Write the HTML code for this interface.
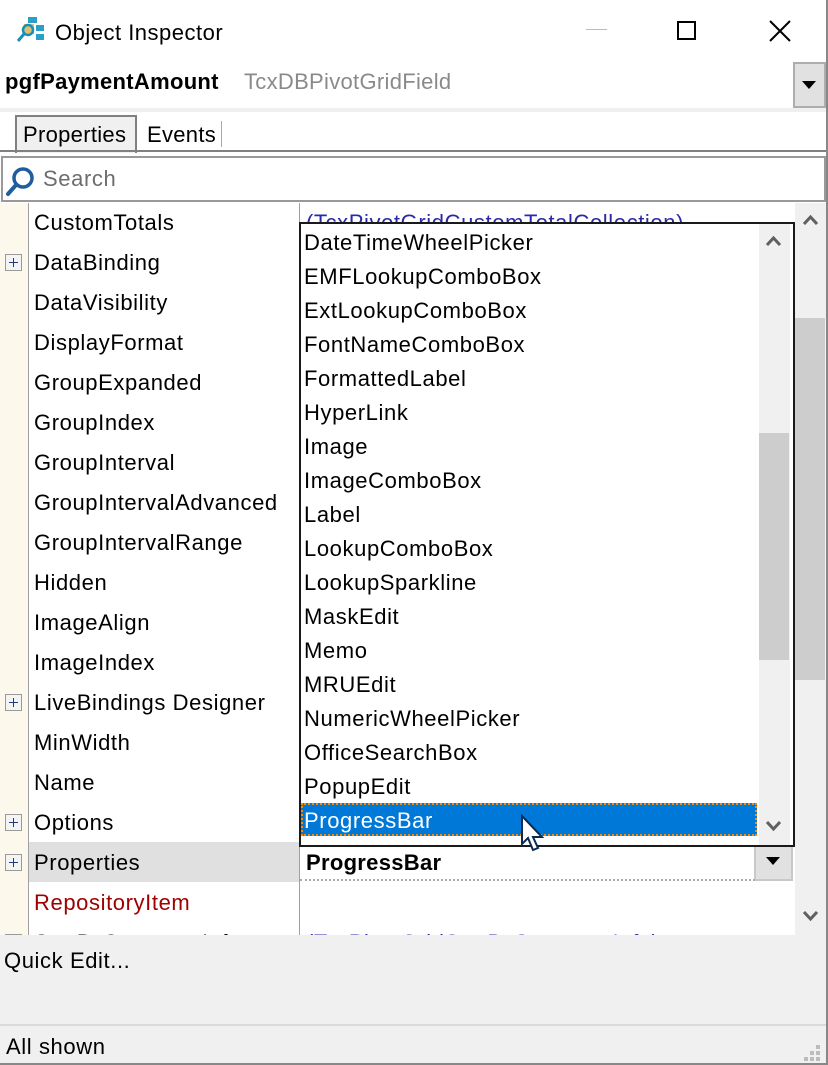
<!DOCTYPE html>
<html><head><style>
*{margin:0;padding:0;box-sizing:border-box}
body{width:828px;height:1065px;overflow:hidden;background:#fff;font-family:"Liberation Sans",sans-serif;font-size:22px;letter-spacing:0.6px;color:#000;position:relative}
.a{position:absolute;white-space:nowrap}
.row{position:absolute;left:34px;height:40px;line-height:42px}
.it{position:absolute;left:304px;height:34px;line-height:36px}
.plus{position:absolute;left:5px;width:17px;height:17px;border:1px solid #999;background:#f4f4f4}
.plus:before{content:"";position:absolute;left:3px;top:7px;width:9px;height:1px;background:#1c3d7a}
.plus:after{content:"";position:absolute;left:7px;top:3px;width:1px;height:9px;background:#1c3d7a}
</style></head><body>
<svg class="a" style="left:16px;top:16px" width="30" height="30" viewBox="0 0 30 30"><rect x="12" y="1" width="9" height="6" fill="#2aa0c8"/><rect x="20" y="9" width="8" height="6" fill="#2aa0c8"/><rect x="20" y="18" width="8" height="6" fill="#2aa0c8"/><rect x="8" y="8" width="10" height="10" fill="#e0c070"/><circle cx="12" cy="14" r="5" fill="none" stroke="#1a8fb8" stroke-width="2.5"/><line x1="8" y1="18" x2="2" y2="25" stroke="#1a8fb8" stroke-width="3"/></svg>
<div class="a" style="left:55px;top:20px;font-size:22px;letter-spacing:0.5px">Object Inspector</div>
<div class="a" style="left:586px;top:29px;width:21px;height:1px;background:#bbb"></div>
<div class="a" style="left:677px;top:21px;width:19px;height:19px;border:2px solid #000"></div>
<svg class="a" style="left:769px;top:20px" width="22" height="22"><path d="M1 1L21 21M21 1L1 21" stroke="#000" stroke-width="2"/></svg>
<div class="a" style="left:5px;top:69px;font-weight:bold;font-size:22px;letter-spacing:0.3px">pgfPaymentAmount</div>
<div class="a" style="left:244px;top:69px;font-size:22px;color:#8a8a8a;letter-spacing:0.3px">TcxDBPivotGridField</div>
<div class="a" style="left:793px;top:62px;width:33px;height:46px;background:#e1e1e1;border:2px solid #adadad"></div>
<svg class="a" style="left:802px;top:81px" width="14" height="9"><path d="M0 0H14L7 8Z" fill="#000"/></svg>
<div class="a" style="left:0;top:108px;width:828px;height:4px;background:#f0f0f0"></div>
<div class="a" style="left:15px;top:115px;width:122px;height:38px;border:2px solid #808080;border-bottom:none;background:#f0f0f0"></div>
<div class="a" style="left:23px;top:122px;letter-spacing:0.3px">Properties</div>
<div class="a" style="left:147px;top:122px;letter-spacing:0.3px">Events</div>
<div class="a" style="left:221px;top:121px;width:1px;height:26px;background:#aaa"></div>
<div class="a" style="left:0;top:150px;width:828px;height:2px;background:#808080"></div>
<div class="a" style="left:1px;top:156px;width:825px;height:46px;border:2px solid #999;background:#fff"></div>
<svg class="a" style="left:5px;top:166px" width="30" height="32"><circle cx="18" cy="12" r="9" fill="none" stroke="#1f5e9e" stroke-width="3.5"/><line x1="11" y1="19" x2="3" y2="28" stroke="#1f5e9e" stroke-width="4" stroke-linecap="round"/></svg>
<div class="a" style="left:43px;top:166px;color:#6d6d6d">Search</div>
<div class="a" style="left:0;top:203px;width:28px;height:732px;background:#fdf8ec"></div>
<div class="a" style="left:28px;top:203px;width:1px;height:732px;background:#a0a0a0"></div>
<div class="a" style="left:299px;top:203px;width:1px;height:732px;background:#a0a0a0"></div>
<div class="a" style="left:29px;top:842px;width:270px;height:40px;background:#e0e0e0"></div>
<div class="row" style="top:202px">CustomTotals</div>
<div class="row" style="top:242px">DataBinding</div><div class="plus" style="top:254px"></div>
<div class="row" style="top:282px">DataVisibility</div>
<div class="row" style="top:322px">DisplayFormat</div>
<div class="row" style="top:362px">GroupExpanded</div>
<div class="row" style="top:402px">GroupIndex</div>
<div class="row" style="top:442px">GroupInterval</div>
<div class="row" style="top:482px">GroupIntervalAdvanced</div>
<div class="row" style="top:522px">GroupIntervalRange</div>
<div class="row" style="top:562px">Hidden</div>
<div class="row" style="top:602px">ImageAlign</div>
<div class="row" style="top:642px">ImageIndex</div>
<div class="row" style="top:682px">LiveBindings Designer</div><div class="plus" style="top:694px"></div>
<div class="row" style="top:722px">MinWidth</div>
<div class="row" style="top:762px">Name</div>
<div class="row" style="top:802px">Options</div><div class="plus" style="top:814px"></div>
<div class="row" style="top:842px">Properties</div><div class="plus" style="top:854px"></div>
<div class="row" style="top:882px;color:#a00000">RepositoryItem</div>
<div class="row" style="top:922px">SortBySummaryInfo</div><div class="plus" style="top:934px"></div>
<div class="a" style="left:306px;top:202px;height:40px;line-height:42px;color:#2a2aa8">(TcxPivotGridCustomTotalCollection)</div>
<div class="a" style="left:306px;top:922px;height:40px;line-height:42px;color:#2a2aa8">(TcxPivotGridSortBySummaryInfo)</div>
<div class="a" style="left:306px;top:842px;height:40px;line-height:42px;font-weight:bold;letter-spacing:0.3px">ProgressBar</div>
<div class="a" style="left:754px;top:844px;width:39px;height:37px;background:#e1e1e1;border:2px solid #c8c8c8"></div>
<svg class="a" style="left:766px;top:857px" width="14" height="9"><path d="M0 0H14L7 8Z" fill="#000"/></svg>
<div class="a" style="left:300px;top:879px;width:455px;border-top:2px dotted #aaa"></div>
<div class="a" style="left:795px;top:203px;width:31px;height:732px;background:#f0f0f0"></div>
<div class="a" style="left:795px;top:318px;width:30px;height:362px;background:#cdcdcd"></div>
<svg class="a" style="left:803px;top:215px" width="15" height="10"><path d="M1 9L7.5 2L14 9" fill="none" stroke="#606060" stroke-width="3"/></svg>
<svg class="a" style="left:803px;top:911px" width="15" height="10"><path d="M1 1L7.5 8L14 1" fill="none" stroke="#606060" stroke-width="3"/></svg>
<div class="a" style="left:299px;top:222px;width:496px;height:625px;border:2px solid #1a1a1a;background:#fff"></div>
<div class="a" style="left:759px;top:224px;width:31px;height:621px;background:#f0f0f0"></div>
<div class="a" style="left:759px;top:433px;width:30px;height:227px;background:#cdcdcd"></div>
<svg class="a" style="left:766px;top:236px" width="15" height="10"><path d="M1 9L7.5 2L14 9" fill="none" stroke="#606060" stroke-width="3"/></svg>
<svg class="a" style="left:766px;top:821px" width="15" height="10"><path d="M1 1L7.5 8L14 1" fill="none" stroke="#606060" stroke-width="3"/></svg>
<div class="it" style="top:225px">DateTimeWheelPicker</div>
<div class="it" style="top:259px">EMFLookupComboBox</div>
<div class="it" style="top:293px">ExtLookupComboBox</div>
<div class="it" style="top:327px">FontNameComboBox</div>
<div class="it" style="top:361px">FormattedLabel</div>
<div class="it" style="top:395px">HyperLink</div>
<div class="it" style="top:429px">Image</div>
<div class="it" style="top:463px">ImageComboBox</div>
<div class="it" style="top:497px">Label</div>
<div class="it" style="top:531px">LookupComboBox</div>
<div class="it" style="top:565px">LookupSparkline</div>
<div class="it" style="top:599px">MaskEdit</div>
<div class="it" style="top:633px">Memo</div>
<div class="it" style="top:667px">MRUEdit</div>
<div class="it" style="top:701px">NumericWheelPicker</div>
<div class="it" style="top:735px">OfficeSearchBox</div>
<div class="it" style="top:769px">PopupEdit</div>
<div class="a" style="left:301px;top:803px;width:456px;height:33px;background:#0078d7;border:2px dotted #ff8c00"></div>
<div class="it" style="top:803px;color:#fff">ProgressBar</div>
<svg class="a" style="left:520px;top:814px" width="26" height="40"><path d="M2 2V30L8 24L13 36L18 34L13 23H22Z" fill="#fff" stroke="#0a2a50" stroke-width="2"/></svg>
<div class="a" style="left:0;top:935px;width:828px;height:130px;background:#f0f0f0"></div>
<div class="a" style="left:4px;top:948px">Quick Edit...</div>
<div class="a" style="left:0;top:1024px;width:828px;height:2px;background:#dadada"></div>
<div class="a" style="left:6px;top:1034px">All shown</div>
<svg class="a" style="left:802px;top:1043px" width="20" height="20" fill="#bcbcbc"><rect x="14" y="2" width="4" height="4"/><rect x="8" y="8" width="4" height="4"/><rect x="14" y="8" width="4" height="4"/><rect x="2" y="14" width="4" height="4"/><rect x="8" y="14" width="4" height="4"/><rect x="14" y="14" width="4" height="4"/></svg>
<div class="a" style="left:826px;top:0;width:2px;height:1065px;background:#888"></div>
<div class="a" style="left:0;top:1063px;width:828px;height:2px;background:#888"></div>
</body></html>
